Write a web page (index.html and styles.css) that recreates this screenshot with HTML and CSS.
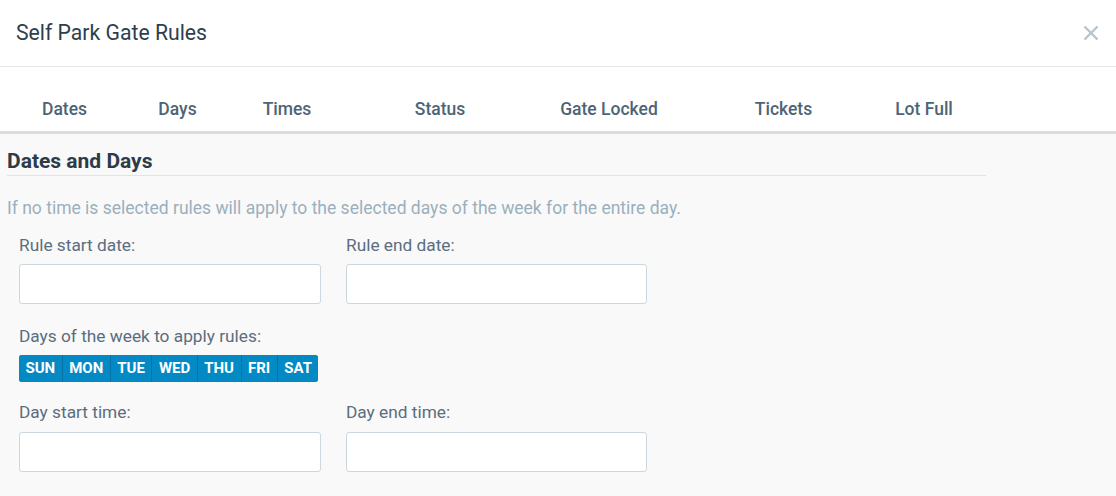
FILE: index.html
```html
<!DOCTYPE html>
<html>
<head>
<meta charset="utf-8">
<link rel="stylesheet" href="styles.css">
</head>
<body>
<div class="modal">
  <div class="header">
    <div class="title">Self Park Gate Rules</div>
    <svg class="close" width="16" height="16" viewBox="0 0 16 16"><path d="M1.5 1.5 L14.5 14.5 M14.5 1.5 L1.5 14.5" stroke="#b8c4ca" stroke-width="2.4" stroke-linecap="butt"/></svg>
  </div>
  <div class="tabs">
    <div class="tab">Dates</div>
    <div class="tab">Days</div>
    <div class="tab">Times</div>
    <div class="tab">Status</div>
    <div class="tab">Gate Locked</div>
    <div class="tab">Tickets</div>
    <div class="tab">Lot Full</div>
  </div>
  <div class="body">
    <div class="section-title">Dates and Days</div>
    <div class="help">If no time is selected rules will apply to the selected days of the week for the entire day.</div>
    <div class="row first">
      <div class="field">
        <div class="label">Rule start date:</div>
        <div class="input"></div>
      </div>
      <div class="field">
        <div class="label">Rule end date:</div>
        <div class="input"></div>
      </div>
    </div>
    <div class="days-block">
      <div class="label">Days of the week to apply rules:</div>
      <div class="days">
        <div class="day">SUN</div>
        <div class="day">MON</div>
        <div class="day">TUE</div>
        <div class="day">WED</div>
        <div class="day">THU</div>
        <div class="day">FRI</div>
        <div class="day">SAT</div>
      </div>
    </div>
    <div class="row second">
      <div class="field">
        <div class="label">Day start time:</div>
        <div class="input"></div>
      </div>
      <div class="field">
        <div class="label">Day end time:</div>
        <div class="input"></div>
      </div>
    </div>
  </div>
</div>
</body>
</html>
```
FILE: styles.css
```css
html, body {
  margin: 0;
  padding: 0;
}
body {
  font-family: Roboto, "Liberation Sans", sans-serif;
  background: #f9f9f9;
  width: 1116px;
  height: 496px;
  overflow: hidden;
}
.modal {
  display: flex;
  flex-direction: column;
}
.header {
  background: #fff;
  height: 66px;
  border-bottom: 1px solid #e5e5e5;
  display: flex;
  align-items: center;
  justify-content: space-between;
  padding: 0 17px 0 16px;
}
.title {
  font-size: 21.2px;
  line-height: 24px;
  color: #2f3e4b;
}
.close {
  display: block;
  margin-top: -1px;
}
.tabs {
  background: #fff;
  border-bottom: 3px solid #dcdcdc;
  display: grid;
  grid-template-columns: 115px 111px 108px 198px 140px 209px 72px;
  padding: 32px 0 12px 7px;
}
.tab {
  text-align: center;
  font-size: 17.5px;
  line-height: 20px;
  font-weight: 500;
  color: #4d6477;
}
.body {
  padding: 0 7px;
}
.section-title {
  width: 979px;
  font-size: 21px;
  line-height: 22px;
  font-weight: 700;
  color: #2d3b48;
  padding: 16px 0 3px;
  border-bottom: 1px solid #e3e3e3;
}
.help {
  font-size: 17.5px;
  line-height: 20px;
  color: #9ab0bc;
  margin-top: 22px;
}
.row {
  display: flex;
  gap: 25px;
  padding-left: 12px;
}
.field {
  width: 302px;
}
.row .field:last-child {
  width: 301px;
}
.label {
  font-size: 17.3px;
  line-height: 20px;
  color: #5a6e7e;
}
.row.first .label {
  margin-top: 17px;
  margin-bottom: 9px;
}
.row.second .label {
  margin-top: 20px;
  margin-bottom: 10px;
}
.input {
  height: 38px;
  background: #fff;
  border: 1px solid #ccd7de;
  border-radius: 3px;
}
.days-block {
  padding-left: 12px;
}
.days-block .label {
  margin-top: 22px;
  margin-bottom: 9px;
}
.days {
  display: inline-flex;
  background: #0389c4;
  border-radius: 3px;
  overflow: hidden;
  vertical-align: top;
}
.day {
  color: #fff;
  font-weight: 700;
  font-size: 15px;
  height: 27px;
  line-height: 27px;
  padding: 0 6.5px;
  border-left: 1px solid #0772a6;
  background: #0389c4;
}
.day:first-child {
  border-left: none;
}
```
